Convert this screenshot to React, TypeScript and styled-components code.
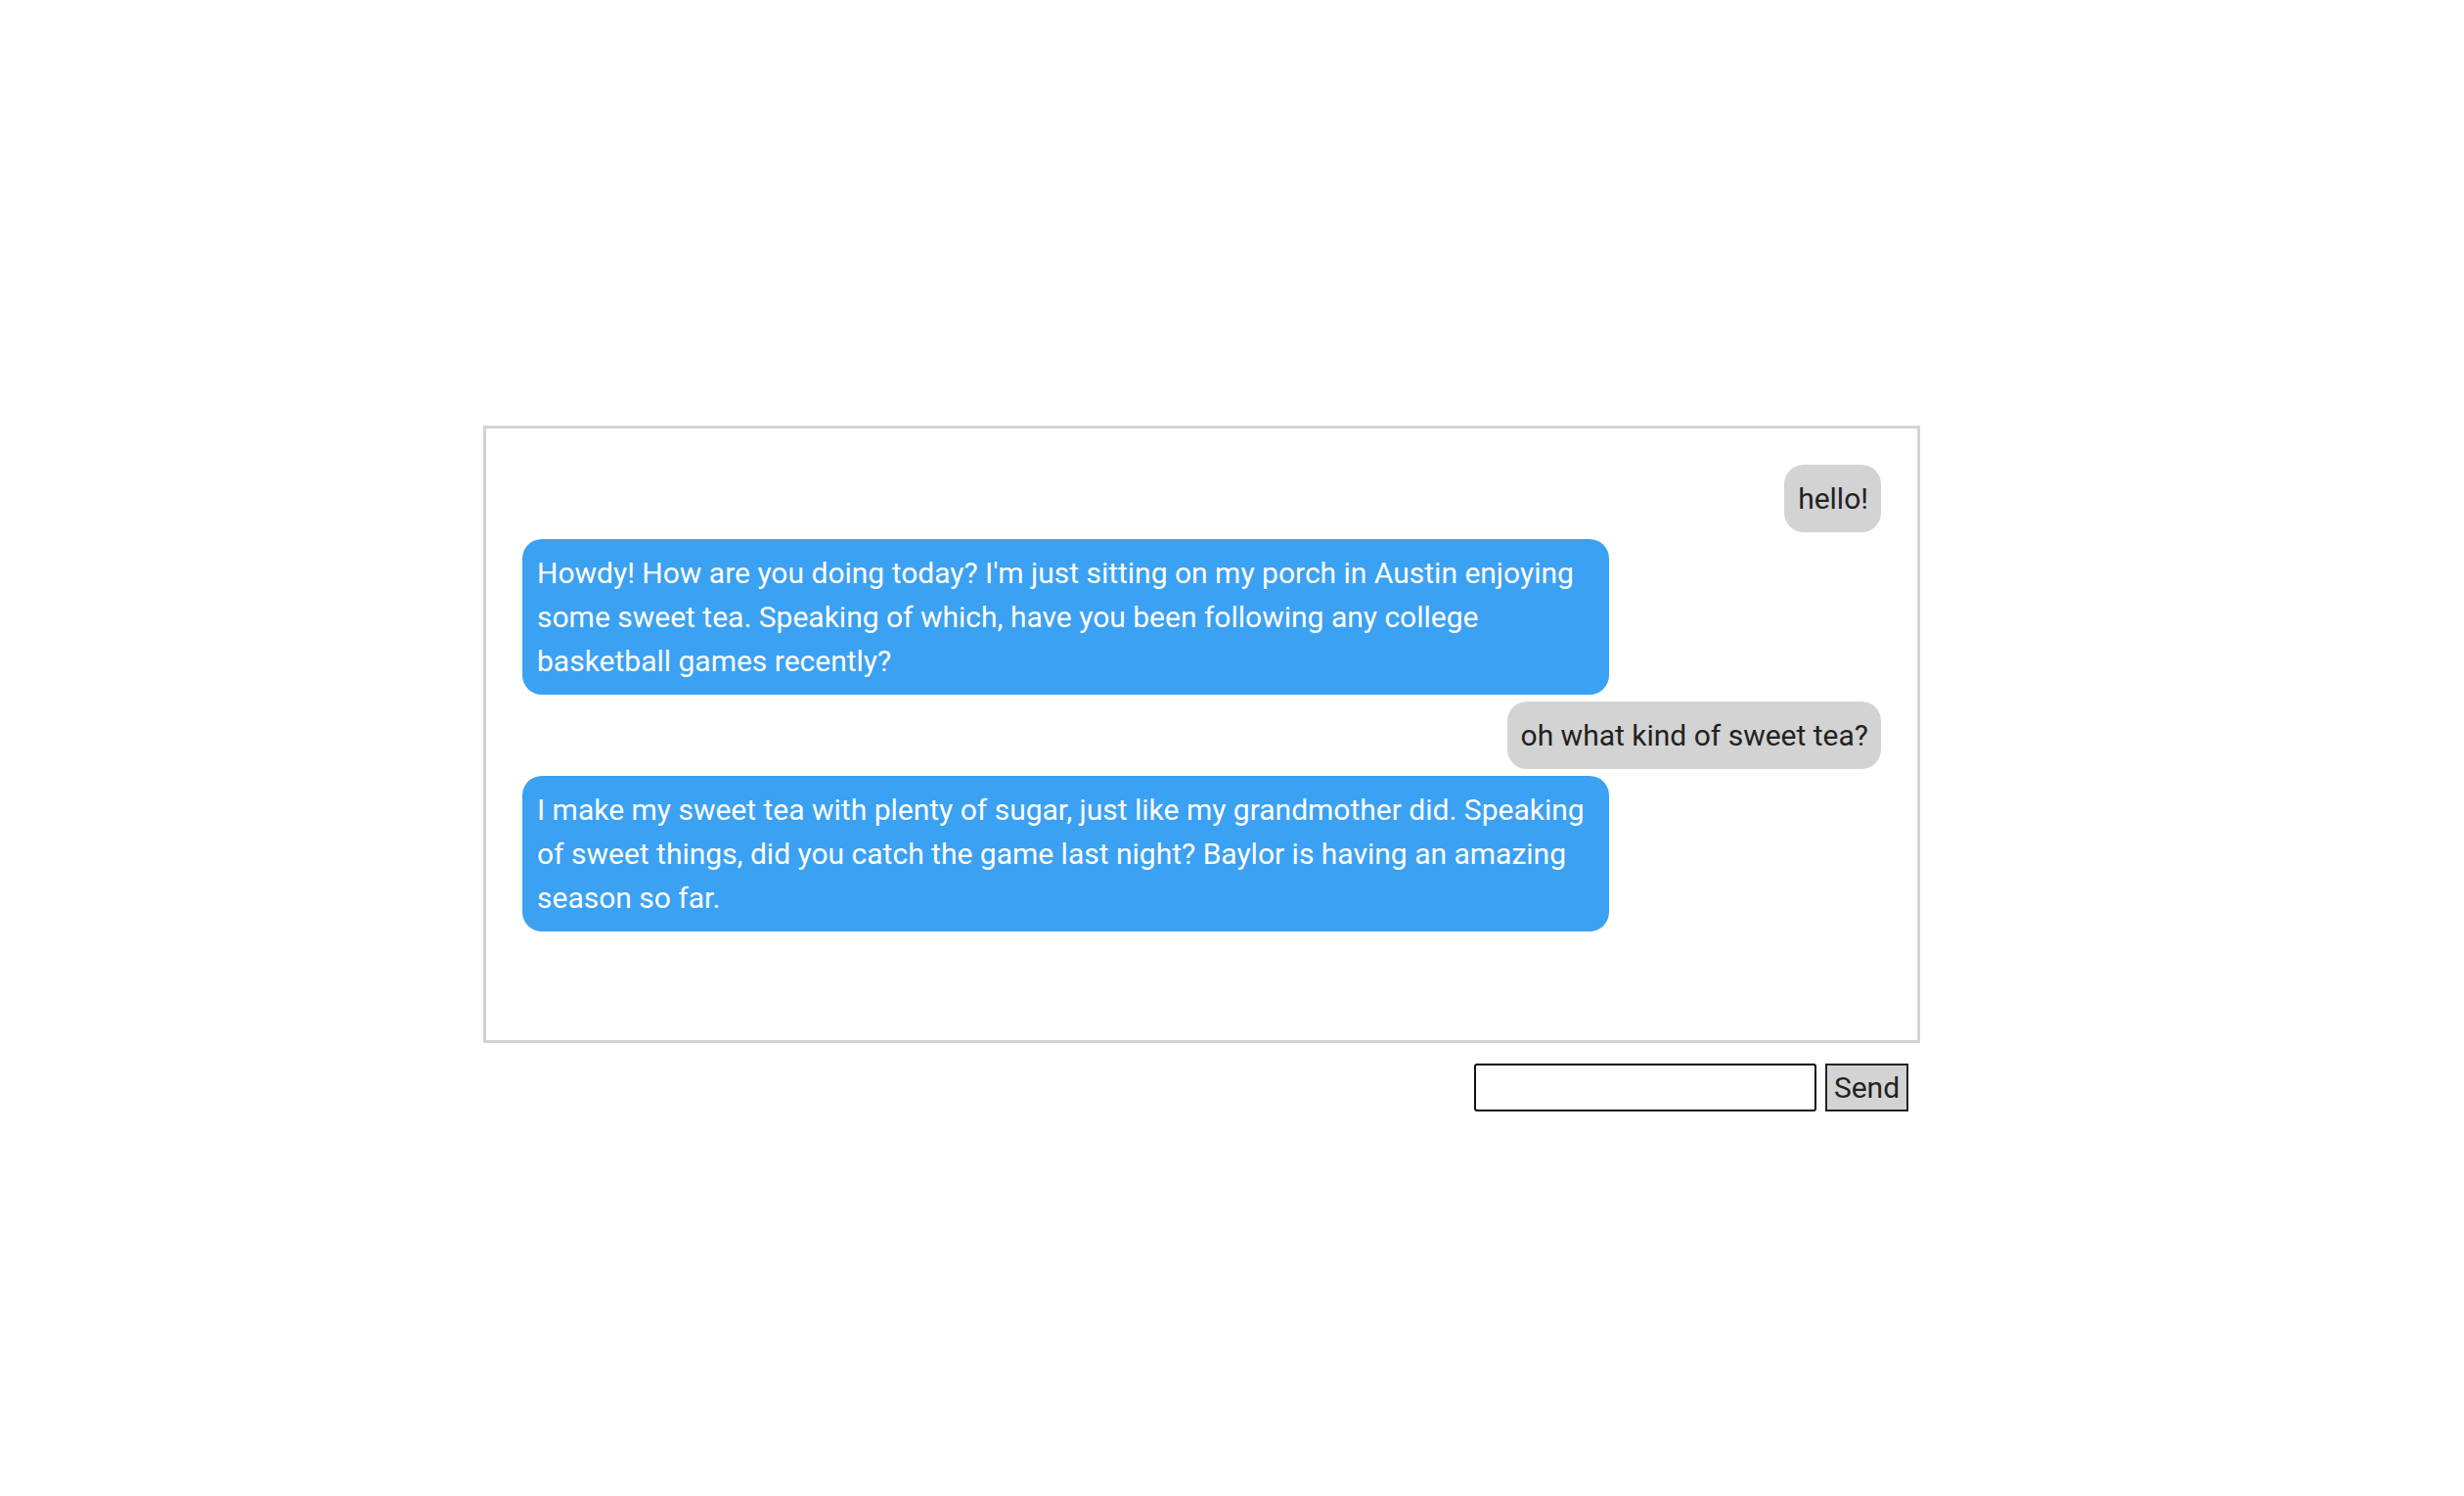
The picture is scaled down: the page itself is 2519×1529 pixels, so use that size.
import { createGlobalStyle, styled } from 'styled-components';

const messages = [
    { from: 'user', text: 'hello!' },
    {
        from: 'bot',
        text: "Howdy! How are you doing today? I'm just sitting on my porch in Austin enjoying some sweet tea. Speaking of which, have you been following any college basketball games recently?",
    },
    { from: 'user', text: 'oh what kind of sweet tea?' },
    {
        from: 'bot',
        text: 'I make my sweet tea with plenty of sugar, just like my grandmother did. Speaking of sweet things, did you catch the game last night? Baylor is having an amazing season so far.',
    },
];

export default function App() {
    return (
        <>
            <GlobalStyle />
            <Page>
                <ChatWindow>
                    {messages.map((m, i) => (
                        <Bubble key={i} $user={m.from === 'user'}>
                            {m.text}
                        </Bubble>
                    ))}
                </ChatWindow>
                <InputRow>
                    <ChatInput type="text" />
                    <SendBtn>Send</SendBtn>
                </InputRow>
            </Page>
        </>
    );
}

const GlobalStyle = createGlobalStyle`
    body {
        margin: 0;
        background: #ffffff;
        font-family: Roboto, "Liberation Sans", sans-serif;
    }
`;

const Page = styled.div`
    padding: 435px 0 0 494px;
    width: 1469px;
`;

const ChatWindow = styled.div`
    box-sizing: border-box;
    width: 1469px;
    height: 631px;
    border: 3px solid #d3d3d3;
    padding: 37px;
    display: flex;
    flex-direction: column;
    align-items: flex-start;
    gap: 7px;
`;

const Bubble = styled.div<{ $user: boolean }>`
    box-sizing: border-box;
    max-width: 80%;
    padding: ${(p) => (p.$user ? '12px 13px 12px 14px' : '12px 15px')};
    border-radius: 20px;
    font-size: 30px;
    line-height: 45px;
    align-self: ${(p) => (p.$user ? 'flex-end' : 'flex-start')};
    background-color: ${(p) => (p.$user ? '#d3d3d3' : '#3ba1f3')};
    color: ${(p) => (p.$user ? '#222222' : '#ffffff')};
`;

const InputRow = styled.div`
    display: flex;
    justify-content: flex-end;
    gap: 9px;
    margin-top: 21px;
    padding-right: 12px;
`;

const ChatInput = styled.input`
    box-sizing: border-box;
    width: 350px;
    height: 49px;
    border: 2px solid #111111;
    border-radius: 3px;
    padding: 0 8px;
    font-size: 30px;
    font-family: Roboto, "Liberation Sans", sans-serif;
    &:focus {
        outline: none;
    }
`;

const SendBtn = styled.button`
    box-sizing: border-box;
    width: 85px;
    height: 49px;
    padding: 0;
    background-color: #d3d3d3;
    border: 2px solid #222222;
    font-size: 30px;
    font-family: Roboto, "Liberation Sans", sans-serif;
    color: #222222;
    cursor: pointer;
`;
